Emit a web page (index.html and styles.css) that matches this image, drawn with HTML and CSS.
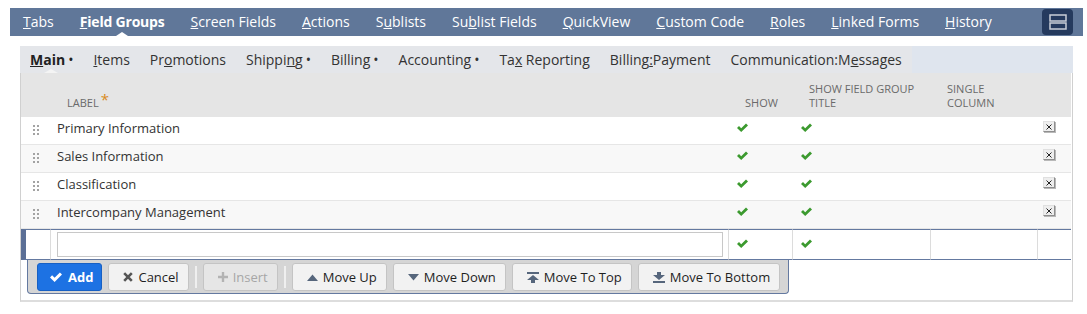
FILE: index.html
```html
<!DOCTYPE html>
<html lang="en">
<head>
  <meta charset="UTF-8">
  <title>Field Groups</title>
  <link rel="stylesheet" href="styles.css">
</head>
<body>

  <div class="page">
    <div class="tabbar">
      <ul class="tabs">
        <li><u>T</u>abs</li>
        <li class="active"><u>F</u>ield Groups</li>
        <li><u>S</u>creen Fields</li>
        <li><u>A</u>ctions</li>
        <li>S<u>u</u>blists</li>
        <li>Su<u>b</u>list Fields</li>
        <li><u>Q</u>uickView</li>
        <li><u>C</u>ustom Code</li>
        <li><u>R</u>oles</li>
        <li><u>L</u>inked Forms</li>
        <li><u>H</u>istory</li>
      </ul>
      <button class="menu-btn">
        <svg width="18" height="16" viewBox="0 0 18 16"><rect x="1" y="1" width="16" height="6" fill="none" stroke="#c9ced8" stroke-width="1.5"/><rect x="1" y="9" width="16" height="6" fill="none" stroke="#c9ced8" stroke-width="1.5"/></svg>
      </button>
    </div>

    <div class="content">
      <div class="subtabs">
        <div class="subtab-items">
          <span class="subtab active"><u>M</u>ain<span class="dot">&bull;</span></span>
          <span class="subtab"><u>I</u>tems</span>
          <span class="subtab">Pr<u>o</u>motions</span>
          <span class="subtab">Shippi<u>n</u>g<span class="dot">&bull;</span></span>
          <span class="subtab">Billing<span class="dot">&bull;</span></span>
          <span class="subtab">Accounting<span class="dot">&bull;</span></span>
          <span class="subtab">Ta<u>x</u> Reporting</span>
          <span class="subtab">Billing<u>:</u>Payment</span>
          <span class="subtab">Communication:M<u>e</u>ssages</span>
        </div>
      </div>

      <div class="panel">
        <table class="grid">
          <colgroup>
            <col class="c-drag">
            <col class="c-label">
            <col class="c-show">
            <col class="c-title">
            <col class="c-single">
            <col class="c-remove">
          </colgroup>
          <thead>
            <tr>
              <th></th>
              <th>Label<span class="req">*</span></th>
              <th>Show</th>
              <th>Show Field Group<br>Title</th>
              <th>Single<br>Column</th>
              <th></th>
            </tr>
          </thead>
          <tbody>
            <tr>
              <td><svg class="drag" width="6" height="10" viewBox="0 0 6 10"><rect x="0" y="0" width="2" height="2"/><rect x="4" y="0" width="2" height="2"/><rect x="0" y="4" width="2" height="2"/><rect x="4" y="4" width="2" height="2"/><rect x="0" y="8" width="2" height="2"/><rect x="4" y="8" width="2" height="2"/></svg></td>
              <td>Primary Information</td>
              <td><svg class="check" width="11" height="9" viewBox="0 0 11 9"><path d="M0 5 L2 3 L4.2 5.2 L9 0.4 L11 2.4 L4.2 9 Z"/></svg></td>
              <td><svg class="check" width="11" height="9" viewBox="0 0 11 9"><path d="M0 5 L2 3 L4.2 5.2 L9 0.4 L11 2.4 L4.2 9 Z"/></svg></td>
              <td></td>
              <td><span class="remove"><svg width="6" height="6" viewBox="0 0 6 6"><path d="M0.5 0.5 L5.5 5.5 M5.5 0.5 L0.5 5.5" stroke="#222" stroke-width="1"/></svg></span></td>
            </tr>
            <tr class="alt">
              <td><svg class="drag" width="6" height="10" viewBox="0 0 6 10"><rect x="0" y="0" width="2" height="2"/><rect x="4" y="0" width="2" height="2"/><rect x="0" y="4" width="2" height="2"/><rect x="4" y="4" width="2" height="2"/><rect x="0" y="8" width="2" height="2"/><rect x="4" y="8" width="2" height="2"/></svg></td>
              <td>Sales Information</td>
              <td><svg class="check" width="11" height="9" viewBox="0 0 11 9"><path d="M0 5 L2 3 L4.2 5.2 L9 0.4 L11 2.4 L4.2 9 Z"/></svg></td>
              <td><svg class="check" width="11" height="9" viewBox="0 0 11 9"><path d="M0 5 L2 3 L4.2 5.2 L9 0.4 L11 2.4 L4.2 9 Z"/></svg></td>
              <td></td>
              <td><span class="remove"><svg width="6" height="6" viewBox="0 0 6 6"><path d="M0.5 0.5 L5.5 5.5 M5.5 0.5 L0.5 5.5" stroke="#222" stroke-width="1"/></svg></span></td>
            </tr>
            <tr>
              <td><svg class="drag" width="6" height="10" viewBox="0 0 6 10"><rect x="0" y="0" width="2" height="2"/><rect x="4" y="0" width="2" height="2"/><rect x="0" y="4" width="2" height="2"/><rect x="4" y="4" width="2" height="2"/><rect x="0" y="8" width="2" height="2"/><rect x="4" y="8" width="2" height="2"/></svg></td>
              <td>Classification</td>
              <td><svg class="check" width="11" height="9" viewBox="0 0 11 9"><path d="M0 5 L2 3 L4.2 5.2 L9 0.4 L11 2.4 L4.2 9 Z"/></svg></td>
              <td><svg class="check" width="11" height="9" viewBox="0 0 11 9"><path d="M0 5 L2 3 L4.2 5.2 L9 0.4 L11 2.4 L4.2 9 Z"/></svg></td>
              <td></td>
              <td><span class="remove"><svg width="6" height="6" viewBox="0 0 6 6"><path d="M0.5 0.5 L5.5 5.5 M5.5 0.5 L0.5 5.5" stroke="#222" stroke-width="1"/></svg></span></td>
            </tr>
            <tr class="alt">
              <td><svg class="drag" width="6" height="10" viewBox="0 0 6 10"><rect x="0" y="0" width="2" height="2"/><rect x="4" y="0" width="2" height="2"/><rect x="0" y="4" width="2" height="2"/><rect x="4" y="4" width="2" height="2"/><rect x="0" y="8" width="2" height="2"/><rect x="4" y="8" width="2" height="2"/></svg></td>
              <td>Intercompany Management</td>
              <td><svg class="check" width="11" height="9" viewBox="0 0 11 9"><path d="M0 5 L2 3 L4.2 5.2 L9 0.4 L11 2.4 L4.2 9 Z"/></svg></td>
              <td><svg class="check" width="11" height="9" viewBox="0 0 11 9"><path d="M0 5 L2 3 L4.2 5.2 L9 0.4 L11 2.4 L4.2 9 Z"/></svg></td>
              <td></td>
              <td><span class="remove"><svg width="6" height="6" viewBox="0 0 6 6"><path d="M0.5 0.5 L5.5 5.5 M5.5 0.5 L0.5 5.5" stroke="#222" stroke-width="1"/></svg></span></td>
            </tr>
            <tr class="edit">
              <td></td>
              <td><input type="text" class="label-input"></td>
              <td><svg class="check" width="11" height="9" viewBox="0 0 11 9"><path d="M0 5 L2 3 L4.2 5.2 L9 0.4 L11 2.4 L4.2 9 Z"/></svg></td>
              <td><svg class="check" width="11" height="9" viewBox="0 0 11 9"><path d="M0 5 L2 3 L4.2 5.2 L9 0.4 L11 2.4 L4.2 9 Z"/></svg></td>
              <td></td>
              <td></td>
            </tr>
          </tbody>
        </table>

        <div class="actions">
          <button class="btn primary"><svg width="12" height="10" viewBox="0 0 12 10"><path d="M0 5.4 L2.1 3.3 L4.6 5.7 L9.9 0.4 L12 2.5 L4.6 9.9 Z" fill="#fff"/></svg>Add</button>
          <button class="btn"><svg width="10" height="10" viewBox="0 0 10 10"><path d="M1.2 1.2 L8.8 8.8 M8.8 1.2 L1.2 8.8" stroke="#555" stroke-width="2.6"/></svg>Cancel</button>
          <span class="sep"></span>
          <button class="btn disabled"><svg width="10" height="10" viewBox="0 0 10 10"><path d="M5 0 V10 M0 5 H10" stroke="#b3b3b3" stroke-width="2.4"/></svg>Insert</button>
          <span class="sep"></span>
          <button class="btn"><svg width="11" height="7" viewBox="0 0 11 7"><path d="M0 7 L5.5 0.5 L11 7 Z" fill="#56667c"/></svg>Move Up</button>
          <button class="btn"><svg width="11" height="7" viewBox="0 0 11 7"><path d="M0 0 L5.5 6.5 L11 0 Z" fill="#56667c"/></svg>Move Down</button>
          <button class="btn"><svg width="12" height="11" viewBox="0 0 12 11"><path d="M0 0 H12 V2 H0 Z M0 8 L6 3 L12 8 H8 V11 H4 V8 Z" fill="#56667c"/></svg>Move To Top</button>
          <button class="btn"><svg width="12" height="11" viewBox="0 0 12 11"><path d="M4 0 H8 V3 H12 L6 8 L0 3 H4 Z M0 9 H12 V11 H0 Z" fill="#56667c"/></svg>Move To Bottom</button>
        </div>
      </div>
    </div>
  </div>

</body>
</html>
```

FILE: styles.css
```css
body {
  margin: 0;
  font-family: "Open Sans", Arial, sans-serif;
  background-color: #fff;
  color: #333;
}

.page {
  padding: 8px 4px 0 10px;
}

/* main tab bar */
.tabbar {
  display: flex;
  align-items: center;
  justify-content: space-between;
  height: 28px;
  padding-right: 10px;
  background-color: #607799;
}

.tabs {
  display: flex;
  list-style: none;
  margin: 0;
  padding: 0;
}

.tabs li {
  position: relative;
  padding: 0 13px;
  color: #fff;
  font-size: 14px;
  line-height: 28px;
}

.tabs li.active {
  font-weight: 700;
  letter-spacing: -0.2px;
}

.tabs li.active::after {
  content: "";
  position: absolute;
  left: 50%;
  bottom: 0;
  margin-left: -6px;
  border-left: 6px solid transparent;
  border-right: 6px solid transparent;
  border-bottom: 4px solid #fff;
}

.menu-btn {
  display: flex;
  align-items: center;
  justify-content: center;
  width: 31px;
  height: 26px;
  padding: 0;
  border: 0;
  border-radius: 4px;
  background-color: #253a5e;
}

/* sub tabs */
.content {
  width: 1053px;
  margin: 10px 0 0 10px;
}

.subtabs {
  display: flex;
  height: 27px;
  background-color: #dfe5ee;
}

.subtab-items {
  display: flex;
  background-color: #e4e6ea;
}

.subtab {
  position: relative;
  padding: 0 10px;
  font-size: 14px;
  line-height: 27px;
  color: #333;
}

.subtab.active {
  font-weight: 700;
  color: #222;
}

.subtab.active::after {
  content: "";
  position: absolute;
  left: 50%;
  bottom: 0;
  margin-left: -8px;
  border-left: 7px solid transparent;
  border-right: 7px solid transparent;
  border-bottom: 4px solid #f4f4f4;
}

.dot {
  margin-left: 3px;
  font-weight: 400;
}

/* grid */
.panel {
  border: 1px solid #d0d0d0;
  border-top: 0;
  border-bottom: 2px solid #ddd;
  padding-bottom: 6px;
}

.grid {
  width: 1050px;
  table-layout: fixed;
  border-collapse: separate;
  border-spacing: 0;
}

.c-drag { width: 30px; }
.c-label { width: 678px; }
.c-show { width: 64px; }
.c-title { width: 138px; }
.c-single { width: 107px; }
.c-remove { width: 33px; }

.grid th {
  padding: 9px 6px 7px 16px;
  background-color: #e5e5e5;
  color: #6a6a6a;
  font-size: 11px;
  font-weight: 400;
  line-height: 14px;
  text-align: left;
  text-transform: uppercase;
  vertical-align: bottom;
}

.req {
  position: relative;
  top: -2px;
  margin-left: 2px;
  color: #d98b1c;
  font-size: 15px;
  line-height: 10px;
}

.grid td {
  height: 17px;
  padding: 3px 6px 7px;
  border-bottom: 1px solid #e6e6e6;
  font-size: 13px;
  line-height: 17px;
  color: #333;
  vertical-align: top;
}

.grid tr.alt td {
  background-color: #f8f8f8;
}

.drag {
  display: block;
  margin: 5px 0 0 6px;
  fill: #a3a3a3;
}

.check {
  display: block;
  margin: 3px 0 0 2px;
  fill: #3c9a2f;
}

.remove {
  display: flex;
  align-items: center;
  justify-content: center;
  box-sizing: border-box;
  width: 12px;
  height: 11px;
  margin: 1px 0 0 -1px;
  border: 1px solid #8f8f8f;
  border-top-color: #e0e0e0;
  border-left-color: #e0e0e0;
  background-color: #eeeeee;
  box-shadow: 1px 1px 0 #b8b8b8;
}

.grid tr.edit td {
  height: 25px;
  padding: 2px 5px 2px 6px;
  border-top: 1px solid #6479a0;
  border-bottom: 1px solid #6479a0;
  border-right: 1px solid #dcdcdc;
  background-color: #fff;
}

.grid tr.edit td:first-child {
  border-left: 5px solid #5b6f96;
}

.grid tr.edit td:last-child {
  border-right: 0;
}

.grid tr.edit .check {
  margin-top: 7px;
}

.label-input {
  display: block;
  box-sizing: border-box;
  width: 100%;
  height: 25px;
  margin: 0;
  border: 1px solid #c8c8c8;
  background-color: #fff;
}

/* buttons */
.actions {
  display: flex;
  align-items: center;
  gap: 6px;
  width: 762px;
  box-sizing: border-box;
  margin-left: 6px;
  padding: 3px 9px 2px;
  border: 1px solid #6479a0;
  border-top: 0;
  border-radius: 0 0 4px 4px;
  background-color: #d5d5d5;
}

.btn {
  display: inline-flex;
  flex-shrink: 0;
  align-items: center;
  gap: 5px;
  height: 28px;
  padding: 0 9px 0 14px;
  border: 1px solid #c4c4c4;
  border-radius: 3px;
  background-color: #f2f2f2;
  font-family: "Open Sans", Arial, sans-serif;
  font-size: 13px;
  color: #1f1f1f;
  white-space: nowrap;
}

.btn.primary {
  padding: 0 8px 0 12px;
  gap: 6px;
  border-color: #1760c4;
  background-color: #1d72e3;
  color: #fff;
  font-weight: 700;
}

.btn.disabled {
  background-color: #e6e6e6;
  color: #a6a6a6;
}

.sep {
  flex-shrink: 0;
  width: 2px;
  height: 22px;
  background-color: #efefef;
}
```
